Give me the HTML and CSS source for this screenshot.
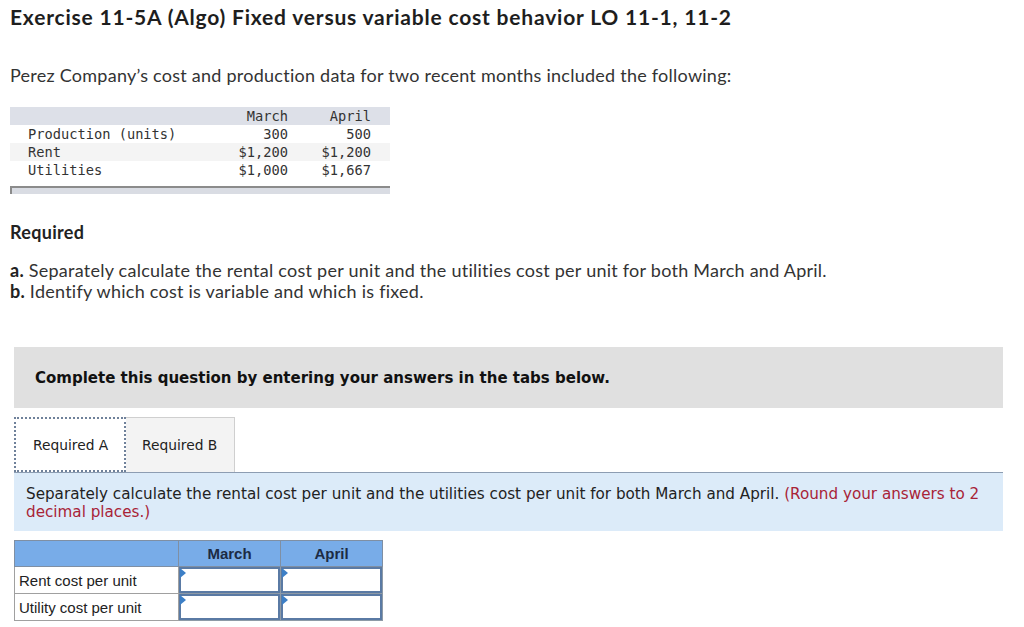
FILE: index.html
```html
<!DOCTYPE html>
<html>
<head>
<meta charset="utf-8">
<link rel="stylesheet" href="styles.css">
</head>
<body>
<div class="page">
  <h1 class="title">Exercise 11-5A (Algo) Fixed versus variable cost behavior LO 11-1, 11-2</h1>
  <p class="intro">Perez Company’s cost and production data for two recent months included the following:</p>

  <div class="data">
    <div class="data-row data-head"><span></span><span class="num">March</span><span class="num">April</span></div>
    <div class="data-row"><span>Production (units)</span><span class="num">300</span><span class="num">500</span></div>
    <div class="data-row stripe"><span>Rent</span><span class="num">$1,200</span><span class="num">$1,200</span></div>
    <div class="data-row"><span>Utilities</span><span class="num">$1,000</span><span class="num">$1,667</span></div>
    <div class="data-foot"></div>
  </div>

  <h2 class="req-title">Required</h2>
  <div class="req-list">
    <p><b>a.</b> Separately calculate the rental cost per unit and the utilities cost per unit for both March and April.</p>
    <p><b>b.</b> Identify which cost is variable and which is fixed.</p>
  </div>

  <div class="instr">Complete this question by entering your answers in the tabs below.</div>

  <div class="tabs">
    <div class="tab active">Required A</div>
    <div class="tab">Required B</div>
  </div>
  <div class="panel">
    <p class="panel-text">Separately calculate the rental cost per unit and the utilities cost per unit for both March and April. <span class="red">(Round your answers to 2 decimal places.)</span></p>
  </div>

  <table class="answer">
    <tr class="ans-head"><th class="lbl"></th><th>March</th><th>April</th></tr>
    <tr><td class="lbl">Rent cost per unit</td><td class="inp"><div class="box"></div></td><td class="inp"><div class="box"></div></td></tr>
    <tr><td class="lbl">Utility cost per unit</td><td class="inp"><div class="box"></div></td><td class="inp"><div class="box"></div></td></tr>
  </table>
</div>
</body>
</html>
```

FILE: styles.css
```css
* { box-sizing: border-box; }
html, body { margin: 0; padding: 0; background: #fff; }
.page { padding: 5px 10px 0 10px; font-family: Lato, "Liberation Sans", sans-serif; color: #222; }

.title { margin: 0; font-size: 21px; line-height: 24px; font-weight: 700; letter-spacing: 0.8px; color: #1e1e1e; }
.intro { margin: 35px 0 0 0; font-size: 18px; line-height: 22px; letter-spacing: 0.25px; color: #333; }

.data { width: 380px; margin-top: 21px; font-family: "DejaVu Sans Mono", "Liberation Mono", monospace; font-size: 13.7px; color: #333; }
.data-row { display: grid; grid-template-columns: 1fr 80px 83px; padding: 0 19px 0 18px; height: 18px; line-height: 18px; }
.data-head { background: #dde0e8; }
.stripe { background: #f4f4f4; }
.num { text-align: right; }
.data-foot { margin-top: 7px; height: 8px; background: #d9dce3; border-top: 2px solid #8b8b8b; border-left: 2px solid #8b8b8b; }

.req-title { margin: 27px 0 0 0; font-size: 18px; line-height: 22px; font-weight: 700; letter-spacing: 0.3px; color: #222; }
.req-list { margin-top: 17px; font-size: 18px; line-height: 21px; letter-spacing: 0.25px; color: #333; }
.req-list p { margin: 0; }
.req-list b { color: #222; }

.instr { margin: 45px 0 0 4px; width: 989px; height: 61px; background: #e0e0e0; padding-left: 21px; display: flex; align-items: center; font-family: "DejaVu Sans", Verdana, sans-serif; font-weight: 700; font-size: 15px; color: #111; }

.tabs { display: flex; margin: 9px 0 0 4px; }
.tab { height: 55px; display: flex; align-items: center; font-family: "DejaVu Sans", Verdana, sans-serif; font-size: 13.8px; color: #222; }
.tab.active { width: 112px; padding-left: 17px; background: #fff; border: 2px dotted #6f819a; }
.tab:not(.active) { width: 109px; padding-left: 16px; background: #f3f3f3; border: 1px solid #cfcfcf; border-bottom: none; border-left: none; }

.panel { margin-left: 4px; width: 989px; height: 59px; background: #dcebf9; border-top: 1px solid #8d9db2; padding: 12px 12px 0 12px; font-family: "DejaVu Sans", Verdana, sans-serif; font-size: 15.2px; line-height: 18px; color: #222; }
.panel-text { margin: 0; }
.red { color: #a82337; }

.answer { margin: 9px 0 0 4px; border-collapse: collapse; font-family: "Liberation Sans", Arial, sans-serif; font-size: 15px; color: #222; }
.answer th, .answer td { border: 1px solid #8e9aa6; padding: 0; }
.ans-head th { background: #78ace8; height: 26px; font-weight: 700; color: #1c2b44; width: 102px; border-color: #7f8fa3; }
.ans-head th.lbl { width: 164px; }
.answer td { height: 27px; }
.answer td.lbl { padding-left: 4px; border-color: #a0a0a0; }
.inp { position: relative; }
.box { height: 100%; border: 2px solid #5a7aa4; background: #fff; position: relative; }
.box::before { content: ""; position: absolute; left: -1px; top: -1px; border-left: 6px solid #3d7fc6; border-top: 5px solid transparent; border-bottom: 5px solid transparent; }
```
